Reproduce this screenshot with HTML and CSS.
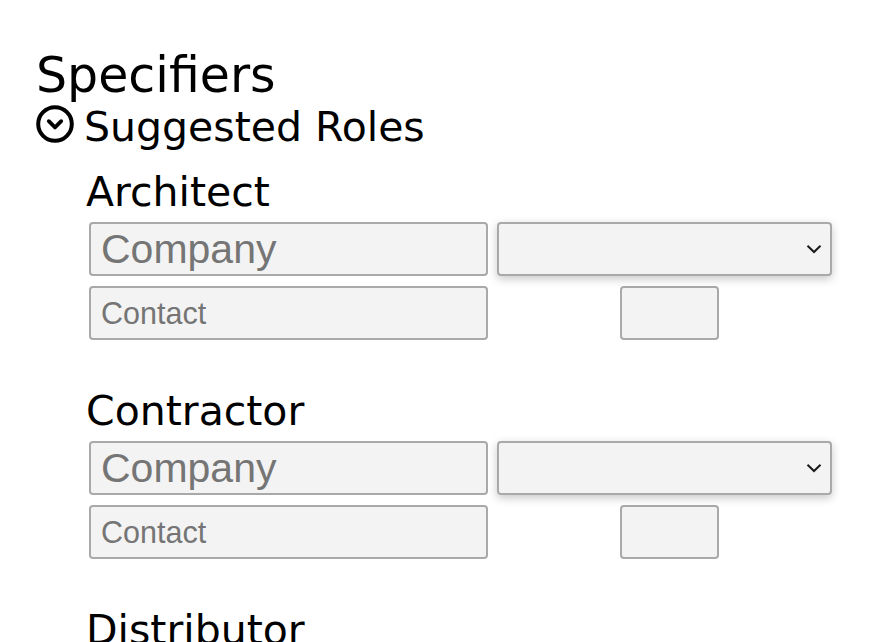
FILE: index.html
```html
<!DOCTYPE html>
<html>
<head>
<meta charset="utf-8">
<link rel="stylesheet" href="styles.css">
</head>
<body>
<div class="page">
  <h1 class="title">Specifiers</h1>
  <div class="group-head">
    <svg class="toggle-icon" width="38" height="38" viewBox="0 0 38 38" aria-hidden="true">
      <circle cx="19" cy="19" r="16.8" fill="none" stroke="#000" stroke-width="4"/>
      <path d="M12.8 16.2 L19 22.4 L25.2 16.2" fill="none" stroke="#000" stroke-width="3.8" stroke-linecap="round" stroke-linejoin="round"/>
    </svg>
    <span class="group-title">Suggested Roles</span>
  </div>

  <section class="role">
    <h2 class="role-name">Architect</h2>
    <div class="row">
      <input class="field field-company" type="text" placeholder="Company">
      <div class="picker-wrap">
        <select class="picker"><option></option></select>
        <svg class="picker-arrow" width="16" height="10" viewBox="0 0 16 10" aria-hidden="true"><path d="M1.5 1.8 L8 8 L14.5 1.8" fill="none" stroke="#1a1a1a" stroke-width="2"/></svg>
      </div>
    </div>
    <div class="row">
      <input class="field field-contact" type="text" placeholder="Contact">
      <input class="field field-small" type="text">
    </div>
  </section>

  <section class="role">
    <h2 class="role-name">Contractor</h2>
    <div class="row">
      <input class="field field-company" type="text" placeholder="Company">
      <div class="picker-wrap">
        <select class="picker"><option></option></select>
        <svg class="picker-arrow" width="16" height="10" viewBox="0 0 16 10" aria-hidden="true"><path d="M1.5 1.8 L8 8 L14.5 1.8" fill="none" stroke="#1a1a1a" stroke-width="2"/></svg>
      </div>
    </div>
    <div class="row">
      <input class="field field-contact" type="text" placeholder="Contact">
      <input class="field field-small" type="text">
    </div>
  </section>

  <section class="role">
    <h2 class="role-name">Distributor</h2>
    <div class="row">
      <input class="field field-company" type="text" placeholder="Company">
      <div class="picker-wrap">
        <select class="picker"><option></option></select>
        <svg class="picker-arrow" width="16" height="10" viewBox="0 0 16 10" aria-hidden="true"><path d="M1.5 1.8 L8 8 L14.5 1.8" fill="none" stroke="#1a1a1a" stroke-width="2"/></svg>
      </div>
    </div>
  </section>
</div>
</body>
</html>
```

FILE: styles.css
```css
html, body {
  margin: 0;
  padding: 0;
  background: #fff;
}

.page {
  padding: 48px 0 0 36px;
  font-family: "DejaVu Sans", sans-serif;
  color: #000;
}

.title {
  margin: 0;
  font-size: 49px;
  line-height: 56px;
  font-weight: normal;
}

.group-head {
  display: flex;
  align-items: flex-start;
  gap: 10px;
  margin-top: 3px;
  height: 40px;
}

.toggle-icon {
  flex: none;
  margin-top: -2px;
}

.group-title {
  font-size: 41px;
  line-height: 40px;
}

.role {
  margin-left: 50px;
  margin-top: 23px;
  padding-bottom: 16px;
}

.role-name {
  margin: 0 0 8px 0;
  font-size: 41px;
  line-height: 44px;
  font-weight: normal;
}

.row {
  display: flex;
  align-items: center;
  margin-left: 3px;
  margin-bottom: 10px;
}

.field {
  box-sizing: border-box;
  height: 54px;
  background: #f3f3f3;
  border: 2px solid #a9a9a9;
  border-radius: 4px;
  padding: 0 10px;
  font-family: "Liberation Sans", Arial, sans-serif;
  color: #333;
  outline: none;
}

.field::placeholder {
  color: #757575;
}

.field-company {
  width: 399px;
  font-size: 41px;
}

.field-contact {
  width: 399px;
  font-size: 30.5px;
}

.field-small {
  width: 99px;
  margin-left: 132px;
}

.picker-wrap {
  position: relative;
  margin-left: 9px;
}

.picker {
  display: block;
  box-sizing: border-box;
  width: 335px;
  height: 54px;
  -webkit-appearance: none;
  appearance: none;
  background-color: #f3f3f3;
  border: 2px solid #a9a9a9;
  border-radius: 4px;
  box-shadow: 0 3px 10px rgba(0, 0, 0, 0.22);
  font-family: "Liberation Sans", Arial, sans-serif;
  font-size: 20px;
  outline: none;
}

.picker-arrow {
  position: absolute;
  right: 10px;
  top: 22px;
  pointer-events: none;
}
```
